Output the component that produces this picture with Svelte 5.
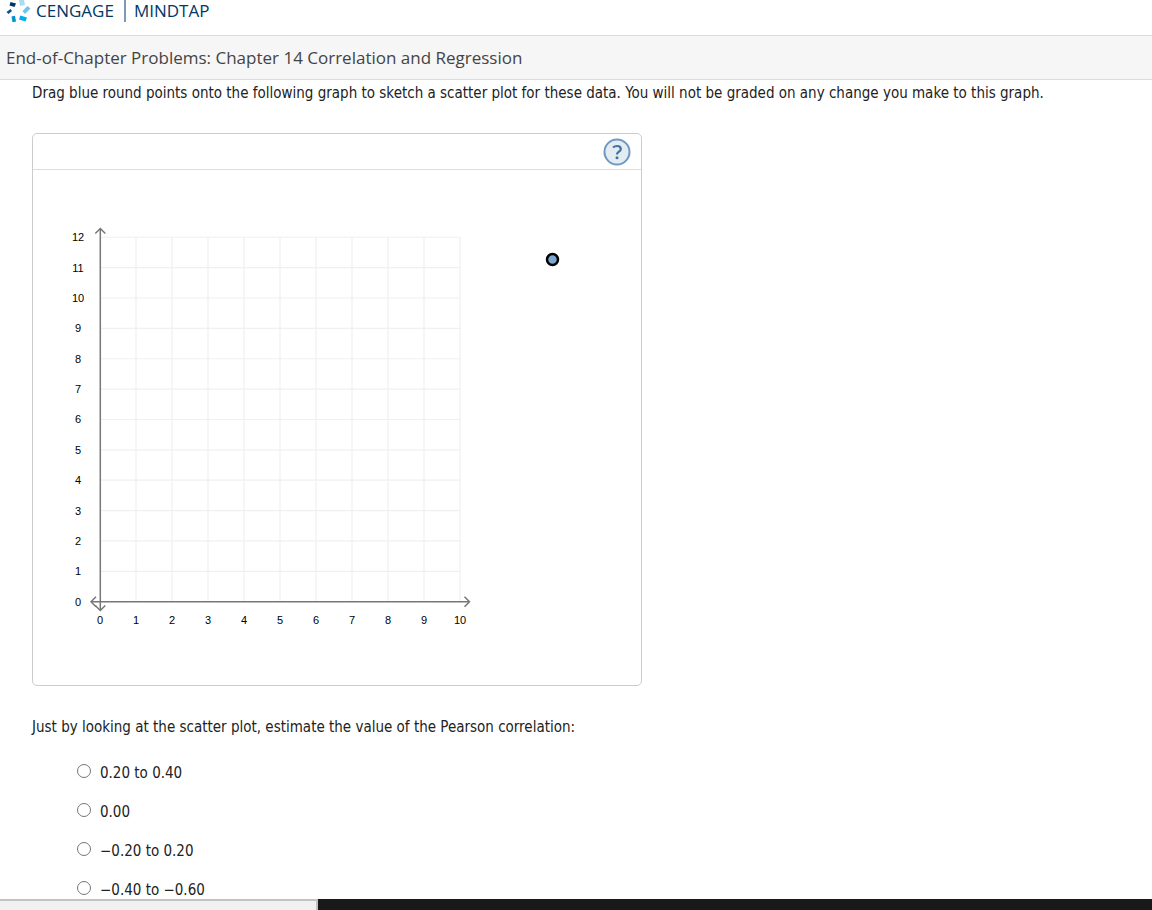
<script>
  const xTicks = Array.from({ length: 11 }, (_, i) => i);
  const yTicks = Array.from({ length: 13 }, (_, i) => i);
  const choices = ['0.20 to 0.40', '0.00', '−0.20 to 0.20', '−0.40 to −0.60'];

  const xAt = (v) => 67 + v * 36;
  const yAt = (v) => 431.7 - v * 30.37;

  let selected = $state('');
  let point = $state({ x: 520, y: 90 });
  let dragging = $state(false);
  let plot;

  function grab(event) {
    dragging = true;
    event.currentTarget.setPointerCapture(event.pointerId);
  }

  function drag(event) {
    if (!dragging) return;
    const box = plot.getBoundingClientRect();
    const scale = 608 / box.width;
    point = { x: (event.clientX - box.left) * scale, y: (event.clientY - box.top) * scale };
  }
</script>

<div class="page">
  <header class="brand">
    <svg class="mark" width="26" height="24" viewBox="0 0 26 24" aria-hidden="true">
      <path d="M4.500 2 L10 3.500 L8.500 7 L3.500 5.500Z" fill="#003865" />
      <path d="M4.500 9 L6 11 L2.500 14 L0.500 12Z" fill="#00558c" />
      <path d="M5.500 16.500 L9 15.800 L10 21.500 L6.500 22.300Z" fill="#0092cc" />
      <path d="M14.300 15.500 L21 17.500 L19.500 21.500 L13 19.500Z" fill="#00aeef" />
      <path d="M16.500 11 L21.500 6 L24.500 8.500 L19 14Z" fill="#6cc5ec" />
      <path d="M13 0 L18 0 L19 5 L14 6Z" fill="#a5ddf5" />
    </svg>
    <span class="name">CENGAGE</span>
    <span class="rule"></span>
    <span class="name">MINDTAP</span>
  </header>

  <div class="titlebar"><h1>End-of-Chapter Problems: Chapter 14 Correlation and Regression</h1></div>

  <main>
    <p>Drag blue round points onto the following graph to sketch a scatter plot for these data. You will not be graded on any change you make to this graph.</p>

    <section class="panel" aria-label="Graph tool">
      <div class="tools">
        <button type="button" aria-label="Help">
          <svg width="28" height="28" viewBox="0 0 28 28">
            <circle cx="14" cy="14" r="12.500" fill="#e3ebf3" stroke="#6f99c1" stroke-width="2" />
            <path d="M10 9.500 C11.200 8.400 12.500 8 14 8 C16.500 8 17.800 9.200 17.800 10.900 C17.800 13.700 14 13.700 14 16.500" fill="none" stroke="#44729f" stroke-width="2.200" />
            <circle cx="14" cy="19.800" r="1.500" fill="#44729f" />
          </svg>
        </button>
      </div>
      <svg class="plot" viewBox="0 0 608 515" bind:this={plot} role="group" aria-label="Scatter plot">
        <g class="grid">
          {#each xTicks.slice(1) as v}
            <line x1={xAt(v)} y1={yAt(12)} x2={xAt(v)} y2={yAt(0)} />
          {/each}
          {#each yTicks.slice(1) as v}
            <line x1={xAt(0)} y1={yAt(v)} x2={xAt(10)} y2={yAt(v)} />
          {/each}
        </g>
        <g class="axes">
          <path d="M67.300 59 V440 M59 431.700 H436" />
          <path d="M62.300 63.500 L67.300 58.500 L72.300 63.500 M62.300 435.500 L67.300 440.500 L72.300 435.500" />
          <path d="M63 426.700 L58 431.700 L63 436.700 M431.500 426.700 L436.500 431.700 L431.500 436.700" />
        </g>
        {#each xTicks as v}
          <text x={xAt(v)} y="454">{v}</text>
        {/each}
        {#each yTicks as v}
          <text x="45" y={yAt(v) + 4}>{v}</text>
        {/each}
        <circle
          class="point"
          role="button"
          tabindex="0"
          aria-label="Data point"
          cx={point.x - 0.5}
          cy={point.y - 0.5}
          r="5.500"
          onpointerdown={grab}
          onpointermove={drag}
          onpointerup={() => (dragging = false)}
        />
      </svg>
    </section>

    <fieldset>
      <legend>Just by looking at the scatter plot, estimate the value of the Pearson correlation:</legend>
      {#each choices as choice}
        <label>
          <input type="radio" name="correlation" value={choice} bind:group={selected} />
          <span>{choice}</span>
        </label>
      {/each}
    </fieldset>
  </main>

  <footer><div class="status"></div></footer>
</div>

<style>
  :global(body) {
    background: #fff;
  }
  .page {
    display: flex;
    flex-direction: column;
    height: 100vh;
    overflow: hidden;
    color: #222;
    font-family: "DejaVu Sans Condensed", "DejaVu Sans", Verdana, sans-serif;
    font-size: 15px;
    line-height: 20px;
  }
  .brand {
    display: flex;
    flex: none;
    align-items: flex-start;
    height: 35px;
    padding-left: 6px;
    color: #003865;
    font-family: "Open Sans", sans-serif;
    font-size: 17px;
    line-height: 21px;
  }
  .mark {
    margin-right: 4px;
  }
  .rule {
    width: 2px;
    height: 22px;
    margin: 0 8px 0 10px;
    background: #7c9ab3;
  }
  .titlebar {
    flex: none;
    padding: 10px 6px;
    border-top: 1px solid #ddd;
    border-bottom: 1px solid #ddd;
    background: #f6f6f6;
  }
  h1 {
    margin: 0;
    color: #444;
    font: 400 17px/23px "Open Sans", sans-serif;
  }
  main {
    flex: 1;
    min-height: 0;
    padding: 3px 32px 0;
    overflow: hidden;
  }
  p {
    margin: 0 0 30px;
  }
  .panel {
    box-sizing: border-box;
    max-width: 610px;
    border: 1px solid #ccc;
    border-radius: 5px;
  }
  .tools {
    display: flex;
    justify-content: flex-end;
    height: 35px;
    padding-right: 10px;
    border-bottom: 1px solid #ddd;
  }
  button {
    height: 28px;
    margin: 4px 0 0;
    padding: 0;
    border: 0;
    background: none;
    cursor: pointer;
  }
  svg {
    display: block;
  }
  .plot {
    width: 100%;
  }
  .grid {
    stroke: #f0f0f0;
    stroke-width: 1.2;
  }
  .axes {
    fill: none;
    stroke: #777;
    stroke-width: 1.5;
  }
  text {
    fill: #000;
    font: 11px "Liberation Sans", Arial, sans-serif;
    text-anchor: middle;
  }
  .point {
    fill: #7ba7d1;
    stroke: #000;
    stroke-width: 2.5;
    cursor: move;
    touch-action: none;
  }
  fieldset {
    margin: 31px 0 0;
    padding: 0;
    border: 0;
  }
  legend {
    padding: 0;
    margin-bottom: 26px;
  }
  label {
    display: flex;
    align-items: flex-start;
    gap: 9px;
    width: max-content;
    margin: 0 0 19px 45px;
  }
  input {
    appearance: none;
    box-sizing: border-box;
    width: 14px;
    height: 14px;
    margin: 1px 0 0;
    border: 1px solid #767676;
    border-radius: 50%;
    background: #fff;
  }
  input:checked {
    background: radial-gradient(circle, #0075ff 3px, #fff 4px);
  }
  footer {
    flex: none;
    height: 11px;
    background: #191919;
  }
  .status {
    box-sizing: border-box;
    width: 318px;
    height: 100%;
    border-top: 2px solid #c0c4c0;
    border-right: 2px solid #c0c4c0;
    background: #f1f1f1;
  }
</style>
